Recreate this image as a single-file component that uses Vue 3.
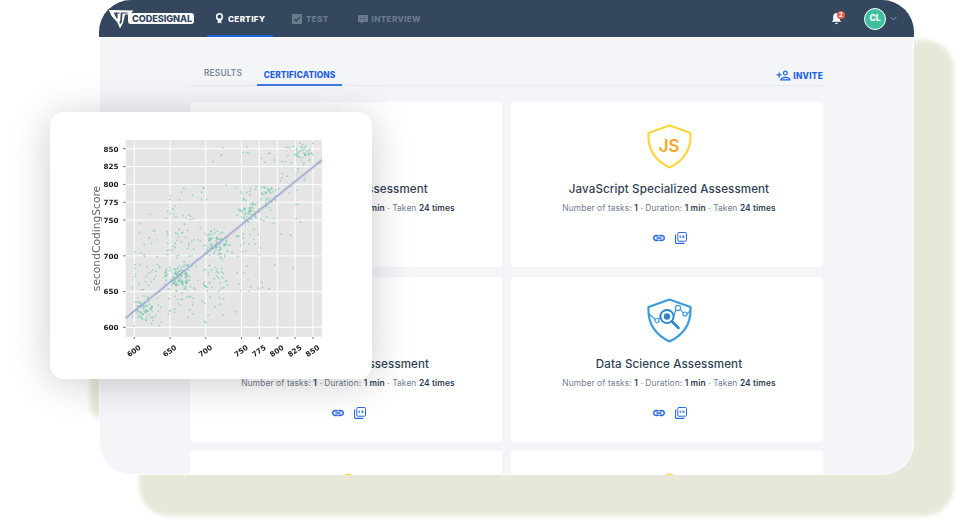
<script setup>
const cards = [
  { id: 1, title: 'General Coding Assessment', icon: 'js' },
  { id: 2, title: 'JavaScript Specialized Assessment', icon: 'js' },
  { id: 3, title: 'Industry Coding Assessment', icon: 'ds' },
  { id: 4, title: 'Data Science Assessment', icon: 'ds' },
  { id: 5, title: '', icon: 'js' },
  { id: 6, title: '', icon: 'js' },
]

const toX = (v) => 134.3 + (v - 600) * 0.7148
const toY = (v) => 327.3 - (v - 600) * 0.7144
const xTicks = [600, 650, 700, 750, 775, 800, 825, 850].map((v) => ({ v, p: toX(v) }))
const yTicks = [600, 650, 700, 750, 775, 800, 825, 850].map((v) => ({ v, p: toY(v) }))

let state = 20240611
const rnd = () => {
  state = (state + 0x6d2b79f5) | 0
  let t = Math.imul(state ^ (state >>> 15), 1 | state)
  t = (t + Math.imul(t ^ (t >>> 7), 61 | t)) ^ t
  return ((t ^ (t >>> 14)) >>> 0) / 4294967296
}
const gauss = () => (rnd() + rnd() + rnd() - 1.5) / 0.5
const spread = () => rnd() * 2 - 1

const cols = [146.7, 180, 215, 249, 268, 287, 303]
const rows = [310, 278, 243, 212, 193, 173, 155]
const density = [
  [75, 24, 12, 2, 0, 0, 0],
  [20, 130, 30, 16, 4, 0, 0],
  [12, 36, 95, 0, 6, 0, 3],
  [1, 10, 18, 55, 10, 0, 5],
  [0, 3, 0, 12, 32, 0, 4],
  [0, 1, 2, 0, 2, 6, 6],
  [0, 0, 0, 4, 1, 4, 42],
]
const dots = []
density.forEach((line, c) => {
  line.forEach((n, r) => {
    for (let i = 0; i < n; i++) {
      const dense = c === r
      const halfX = c < 4 ? 14 : 8
      const halfY = r < 4 ? 14 : 8
      const x = dense ? cols[c] + gauss() * (n > 60 ? 7.5 : 5.2) : cols[c] + spread() * halfX
      const y = dense ? rows[r] + gauss() * (n > 60 ? 7 : 5.2) : rows[r] + spread() * halfY
      if (x > 127 && x < 321 && y > 142 && y < 335) dots.push({ x: +x.toFixed(1), y: +y.toFixed(1) })
    }
  })
})
</script>

<template>
  <div class="stage">
    <div class="olive olive-window"></div>
    <div class="olive olive-chart"></div>

    <section class="window">
      <header class="topbar">
        <div class="logo">
          <svg class="logo-mark" viewBox="0 0 26 20" width="26" height="20">
            <path d="M.8 1 L25.5 1.4 L22 5.4 L17 5.6 L15 14 L12 19.4 L9.4 13.4 L3.6 7 Z" fill="#fff" />
            <path d="M5.6 3.4 L11.6 3.4 L11.6 4.4 L9.6 4.4 L9.6 9.4 L8.6 9.4 Z M12.8 3.4 L20 3.4 L19.2 4.6 L14.6 4.6 L13.6 13.4 L12 15.6 L11.4 13.2 L12.2 12 Z" fill="#34475f" />
          </svg>
          <span class="logo-pill">CODESIGNAL</span>
        </div>
        <nav class="nav">
          <a class="nav-item active">
            <svg viewBox="0 0 10 12" width="9" height="11"><circle cx="5" cy="4" r="3.2" fill="none" stroke="#fff" stroke-width="1.7" /><path d="M3 7.5 V11.5 L5 10.5 L7 11.5 V7.5 Z" fill="#fff" /></svg>
            CERTIFY
          </a>
          <a class="nav-item test">
            <svg viewBox="0 0 10 10" width="10" height="10"><rect width="10" height="10" rx="1" fill="#6b7b8e" /><path d="M2.5 5 L4.3 7 L8 2.8" fill="none" stroke="#34475f" stroke-width="1.2" /></svg>
            TEST
          </a>
          <a class="nav-item interview">
            <svg viewBox="0 0 10 10" width="10" height="10"><path d="M1 1 H9 a1 1 0 0 1 1 1 V7 a1 1 0 0 1 -1 1 H5 L3 10 V8 H1 a1 1 0 0 1 -1 -1 V2 a1 1 0 0 1 1 -1 Z" fill="#6b7b8e" /><path d="M2 4.5 H8" stroke="#34475f" stroke-dasharray="1 1" /></svg>
            INTERVIEW
          </a>
        </nav>
        <div class="user">
          <div class="bell">
            <svg viewBox="0 0 12 14" width="11" height="13"><path d="M6 1 C3.4 1 2.4 3 2.4 5.4 V8.5 L.8 10.6 H11.2 L9.6 8.5 V5.4 C9.6 3 8.6 1 6 1 Z M4.5 11.6 H7.5 C7.5 12.6 6.8 13.2 6 13.2 S4.5 12.6 4.5 11.6 Z" fill="#fff" /></svg>
            <span class="badge">2</span>
          </div>
          <div class="avatar">CL</div>
          <svg class="chevron" viewBox="0 0 8 5" width="7" height="5"><path d="M.7 .7 L4 4 L7.3 .7" fill="none" stroke="#9aa8b8" stroke-width="1" /></svg>
        </div>
      </header>

      <main class="content">
        <div class="tabs">
          <a class="tab">RESULTS</a>
          <a class="tab current">CERTIFICATIONS</a>
          <a class="invite">
            <svg viewBox="0 0 24 24" width="15" height="15"><path fill="#2264e0" d="M15 12c2.21 0 4-1.79 4-4s-1.79-4-4-4-4 1.79-4 4 1.79 4 4 4zm0-6c1.1 0 2 .9 2 2s-.9 2-2 2-2-.9-2-2 .9-2 2-2zm0 8c-2.67 0-8 1.34-8 4v2h16v-2c0-2.66-5.33-4-8-4zm-6 4c.22-.72 3.31-2 6-2 2.7 0 5.8 1.29 6 2H9zM6 15v-3h3v-2H6V7H4v3H1v2h3v3h2v-3z" /></svg>
            INVITE
          </a>
        </div>

        <div class="grid">
          <article v-for="card in cards" :key="card.id" class="card">
            <div class="shield">
              <svg viewBox="0 0 45 45" width="45" height="45">
                <template v-if="card.icon === 'js'">
                  <path d="M22.5 1.5 L43.5 9 C44.5 26 36 37 22.5 43.5 C9 37 .5 26 1.5 9 Z" fill="none" stroke="#fdd53c" stroke-width="2.2" stroke-linejoin="round" />
                </template>
                <template v-else>
                  <path d="M22.5 1.5 L43.5 9 C44.5 26 36 37 22.5 43.5 C9 37 .5 26 1.5 9 Z" fill="none" stroke="#3a9bdc" stroke-width="2.2" stroke-linejoin="round" />
                  <path d="M2 16 L9 22 M11.5 21 L15 18 M27 17 L29 12 M33.5 11.5 L36 15 M40 16 L44 12" stroke="#3a9bdc" stroke-width="1.2" fill="none" />
                  <circle cx="10" cy="22.5" r="2" fill="#fff" stroke="#3a9bdc" stroke-width="1.2" />
                  <circle cx="31" cy="10" r="2.6" fill="#fff" stroke="#3a9bdc" stroke-width="1.2" />
                  <circle cx="38" cy="16" r="2" fill="#fff" stroke="#3a9bdc" stroke-width="1.2" />
                  <circle cx="20" cy="18.5" r="6.6" fill="#fff" stroke="#2f86c8" stroke-width="2" />
                  <circle cx="20" cy="18.5" r="3.2" fill="#2f86c8" />
                  <path d="M25 23.5 L31.5 30" stroke="#2f86c8" stroke-width="2.6" stroke-linecap="round" />
                </template>
              </svg>
              <span v-if="card.icon === 'js' && card.title" class="js">JS</span>
            </div>
            <template v-if="card.title">
              <h3 class="title">{{ card.title }}</h3>
              <p class="meta">Number of tasks: <b>1</b> · Duration: <b>1 min</b> · Taken <b>24 times</b></p>
              <div class="actions">
                <svg viewBox="0 0 24 24" width="14" height="14"><path fill="#2a68d8" stroke="#2a68d8" stroke-width=".8" d="M3.9 12c0-1.71 1.39-3.1 3.1-3.1h4V7H7c-2.76 0-5 2.24-5 5s2.24 5 5 5h4v-1.9H7c-1.71 0-3.1-1.39-3.1-3.1zM8 13h8v-2H8v2zm9-6h-4v1.9h4c1.71 0 3.1 1.39 3.1 3.1s-1.39 3.1-3.1 3.1h-4V17h4c2.76 0 5-2.24 5-5s-2.24-5-5-5z" /></svg>
                <svg viewBox="0 0 12 12" width="12" height="12">
                  <rect x="2.8" y=".5" width="8.7" height="8.7" rx="1" fill="none" stroke="#2a68d8" />
                  <path d="M.6 2.6 V10.4 A1 1 0 0 0 1.6 11.4 H9.4" fill="none" stroke="#2a68d8" stroke-width="1.1" />
                  <path d="M4.6 3.4 H6 V6 H4.6 Z M7.4 3.4 H9.4 V6 H7.4 Z" fill="#2a68d8" opacity=".8" />
                </svg>
              </div>
            </template>
          </article>
        </div>
      </main>
    </section>

    <aside class="chart-card">
      <svg class="plot" viewBox="50 112 322 267" width="322" height="267">
        <rect x="125.6" y="140" width="196.4" height="196.8" fill="#e5e5e5" />
        <line v-for="t in xTicks" :key="'gx' + t.v" :x1="t.p" :x2="t.p" y1="140" y2="336.8" stroke="#fff" stroke-width="1" />
        <line v-for="t in yTicks" :key="'gy' + t.v" :y1="t.p" :y2="t.p" x1="125.6" x2="322" stroke="#fff" stroke-width="1" />
        <circle v-for="(d, i) in dots" :key="i" :cx="d.x" :cy="d.y" r=".9" fill="#5cc6a4" opacity=".55" />
        <path d="M125.6 316 L322 157.5 V162.5 L125.6 320 Z" fill="#a9aed6" opacity=".25" />
        <line x1="125.6" y1="318" x2="322" y2="160" stroke="#9da5cd" stroke-width="1.1" />
        <g v-for="t in xTicks" :key="'tx' + t.v">
          <line :x1="t.p" :x2="t.p" y1="337" y2="339" stroke="#333" stroke-width=".7" />
          <text class="tick" :transform="`translate(${t.p + 1} 353) rotate(-35)`" text-anchor="middle">{{ t.v }}</text>
        </g>
        <g v-for="t in yTicks" :key="'ty' + t.v">
          <line :y1="t.p" :y2="t.p" x1="123" x2="125.6" stroke="#333" stroke-width=".7" />
          <text class="tick" x="118.5" :y="t.p + 2.8" text-anchor="end">{{ t.v }}</text>
        </g>
        <text class="axis" transform="translate(100 238.5) rotate(-90)" text-anchor="middle">secondCodingScore</text>
      </svg>
    </aside>
  </div>
</template>

<style>
html, body { margin: 0; background: #fff; }
</style>

<style scoped>
.stage {
  position: relative;
  width: 960px;
  height: 523px;
  overflow: hidden;
  background: #fff;
  padding-left: 99px;
  box-sizing: border-box;
  font-family: Inter, "Noto Sans", sans-serif;
}
.olive {
  position: absolute;
  background: #e8e8da;
  filter: blur(2px);
}
.olive-window { left: 139px; top: 40px; width: 815px; height: 476px; border-radius: 30px; }
.olive-chart { left: 90px; top: 152px; width: 322px; height: 267px; border-radius: 14px; }

.window {
  position: relative;
  width: 815px;
  height: 475px;
  box-sizing: border-box;
  border-radius: 32px;
  overflow: hidden;
  background: #f3f5f8;
  display: flex;
  flex-direction: column;
}

.topbar {
  height: 37px;
  flex: none;
  background: #34475f;
  display: flex;
  align-items: center;
}
.logo {
  display: flex;
  align-items: center;
  margin-left: 9px;
  width: 99px;
  position: relative;
}
.logo-mark { position: relative; z-index: 1; flex: none; }
.logo-pill {
  margin-left: -6px;
  background: #fff;
  color: #34475f;
  font-size: 9.2px;
  font-weight: 800;
  line-height: 11px;
  height: 11px;
  padding: 0 2px 0 4px;
  border-radius: 3px;
  letter-spacing: -0.1px;
}
.nav { display: flex; align-items: stretch; height: 37px; }
.nav-item {
  display: flex;
  align-items: center;
  gap: 4px;
  font-size: 8px;
  font-weight: 800;
  letter-spacing: 0.4px;
  color: #6b7b8e;
  box-sizing: border-box;
}
.nav-item.active {
  color: #fff;
  width: 66px;
  padding-left: 8px;
  border-bottom: 2px solid #1f66dd;
  padding-top: 2px;
}
.test { margin-left: 19px; }
.interview { margin-left: 29px; }
.user {
  margin-left: auto;
  display: flex;
  align-items: center;
  padding-right: 17px;
}
.bell { position: relative; height: 13px; }
.bell svg { display: block; }
.badge {
  position: absolute;
  left: 6px;
  top: -1px;
  width: 8px;
  height: 8px;
  border-radius: 50%;
  background: #ea5a42;
  color: #fff;
  font-size: 6px;
  font-weight: 700;
  line-height: 8px;
  text-align: center;
}
.avatar {
  width: 22px;
  height: 22px;
  margin-left: 22px;
  box-sizing: border-box;
  border-radius: 50%;
  border: 1px solid #fff;
  background: #3fbfa0;
  color: #fff;
  font-size: 8.5px;
  font-weight: 800;
  text-align: center;
  line-height: 19px;
}
.chevron { margin-left: 4px; }

.content {
  padding: 1px 90px 0;
  flex: 1;
  min-height: 0;
  border-left: 1px solid #fff;
  border-right: 1px solid #fff;
  border-bottom: 1px solid #fff;
  border-bottom-left-radius: 32px;
  border-bottom-right-radius: 32px;
  box-shadow: inset 0 1px 0 #fff;
}
.tabs {
  height: 48px;
  box-sizing: border-box;
  display: flex;
  align-items: flex-end;
  border-bottom: 1px solid #e6e8ec;
}
.tab {
  font-size: 8.3px;
  font-weight: 600;
  letter-spacing: 0.2px;
  color: #7d8a9c;
  padding: 0 6px 7px 14px;
  line-height: 10px;
}
.tab.current {
  margin-left: 9px;
  padding: 0 6.5px 4px;
  font-weight: 800;
  color: #1f5fe0;
  letter-spacing: 0.15px;
  border-bottom: 2px solid #3f78df;
  margin-bottom: -1px;
}
.invite {
  margin-left: auto;
  display: flex;
  align-items: center;
  gap: 2px;
  font-size: 8.3px;
  font-weight: 800;
  letter-spacing: 0.25px;
  color: #1f5fe0;
  padding-bottom: 2px;
}
.grid {
  margin-top: 16px;
  display: grid;
  grid-template-columns: 312px 312px;
  grid-auto-rows: 165px;
  gap: 9.5px 9px;
}
.card {
  background: #fff;
  border-radius: 3px;
  display: flex;
  flex-direction: column;
  align-items: center;
  padding: 21.5px 0 0 4px;
  box-sizing: border-box;
}
.shield { position: relative; width: 45px; height: 45px; flex: none; }
.shield svg { display: block; }
.js {
  position: absolute;
  inset: 0;
  text-align: center;
  line-height: 44px;
  font-size: 17px;
  font-weight: 600;
  letter-spacing: -0.3px;
  color: #f6a623;
}
.title {
  margin: 12.5px 0 0;
  font-size: 11.6px;
  font-weight: 500;
  line-height: 16px;
  letter-spacing: 0.1px;
  color: #2f3f55;
  white-space: nowrap;
}
.meta {
  margin: 5px 0 0;
  font-size: 8.4px;
  line-height: 12px;
  letter-spacing: 0.1px;
  color: #6f7d90;
  white-space: nowrap;
}
.meta b { font-weight: 600; color: #2f3f55; }
.actions {
  margin-top: 17px;
  display: flex;
  align-items: center;
  gap: 9px;
}
.actions svg { display: block; }

.chart-card {
  position: absolute;
  left: 50px;
  top: 112px;
  width: 322px;
  height: 267px;
  border-radius: 14px;
  background: #fff;
  box-shadow: 0 4px 40px rgba(0, 0, 0, 0.2);
}
.plot { display: block; filter: blur(0.3px); }
.tick {
  font-family: "DejaVu Sans", sans-serif;
  font-size: 7.2px;
  font-weight: 700;
  fill: #1c1c1c;
}
.axis {
  font-family: "DejaVu Sans", sans-serif;
  font-size: 10.7px;
  fill: #666;
}
</style>
